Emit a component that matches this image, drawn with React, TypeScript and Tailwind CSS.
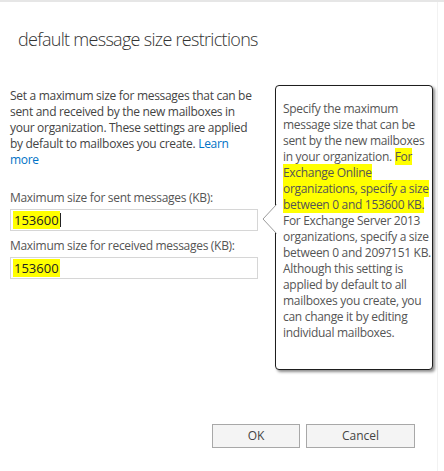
import React from "react";

const helpLines = [
  "Set a maximum size for messages that can be",
  "sent and received by the new mailboxes in",
  "your organization. These settings are applied",
];

const calloutLines: { text: string; mark?: string }[] = [
  { text: "Specify the maximum" },
  { text: "message size that can be" },
  { text: "sent by the new mailboxes" },
  { text: "in your organization. ", mark: "For" },
  { text: "", mark: "Exchange Online" },
  { text: "", mark: "organizations, specify a size" },
  { text: "", mark: "between 0 and 153600 KB." },
  { text: "For Exchange Server 2013" },
  { text: "organizations, specify a size" },
  { text: "between 0 and 2097151 KB." },
  { text: "Although this setting is" },
  { text: "applied by default to all" },
  { text: "mailboxes you create, you" },
  { text: "can change it by editing" },
  { text: "individual mailboxes." },
];

export default function App() {
  return (
    <div
      className="relative w-[444px] h-[471px] bg-white border-t-2 border-[#e6e6e6] text-[#444]"
      style={{ fontFamily: '"Open Sans", "Noto Sans", sans-serif' }}
    >
      <div className="absolute right-[6px] top-0 bottom-0 w-px bg-[#f2f2f2]" />
      <h1 className="pl-[18px] pt-[25px] text-[18px] leading-[24px] font-light text-[#333] tracking-[-0.7px]">
        default message size restrictions
      </h1>

      <div className="flex mt-[34px]">
        {/* left column */}
        <div className="ml-[10px] w-[248px] pt-[3px] text-[12px] leading-[16px] tracking-[-0.3px]">
          <p>
            {helpLines.map((l) => (
              <span key={l} className="block whitespace-nowrap">
                {l}
              </span>
            ))}
            <span className="block whitespace-nowrap">
              by default to mailboxes you create.{" "}
              <span className="text-[#0072c6]">Learn</span>
            </span>
            <span className="block text-[#0072c6]">more</span>
          </p>

          <label className="block mt-[22px] text-[#555]">
            Maximum size for sent messages (KB):
          </label>
          <div className="mt-[3px] h-[22px] border border-[#d6d6d6] flex items-center pl-[2px]">
            <span className="bg-[#ffff00] px-[1px] text-[13px] text-[#222] leading-[18px] tracking-normal">
              153600
            </span>
            <span className="w-px h-[14px] bg-[#222]" />
          </div>

          <label className="block mt-[7px] text-[#555]">
            Maximum size for received messages (KB):
          </label>
          <div className="mt-[3px] h-[22px] border border-[#d6d6d6] flex items-center pl-[2px]">
            <span className="bg-[#ffff00] px-[1px] text-[13px] text-[#222] leading-[18px] tracking-normal">
              153600
            </span>
          </div>
        </div>

        {/* callout */}
        <div className="relative ml-[17px] w-[158px] h-[285px] border border-[#1e1e1e] rounded-[4px] bg-white shadow-[2px_2px_3px_rgba(0,0,0,0.45)] pl-[7px] pt-[15px] text-[12px] leading-[16px] tracking-[-0.3px] text-[#555]">
          <svg
            className="absolute left-[-14px] top-[118px]"
            width="15"
            height="30"
            viewBox="0 0 15 30"
          >
            <path d="M15 0 L1 15 L15 30 Z" fill="#fff" />
            <path d="M14.5 0.5 L1 15 L14.5 29.5" fill="none" stroke="#9a9a9a" strokeWidth="1" />
          </svg>
          {calloutLines.map((l, i) => (
            <span key={i} className="block whitespace-nowrap">
              {l.text}
              {l.mark && <span className="bg-[#ffff00]">{l.mark}</span>}
            </span>
          ))}
        </div>
      </div>

      <div className="flex justify-end gap-[6px] pr-[29px] mt-[54px]">
        <button className="w-[88px] h-[24px] bg-[#f4f4f4] border border-[#a8a8a8] text-[12px] text-[#444]">
          OK
        </button>
        <button className="w-[109px] h-[24px] bg-[#f4f4f4] border border-[#a8a8a8] text-[12px] text-[#444]">
          Cancel
        </button>
      </div>
    </div>
  );
}
